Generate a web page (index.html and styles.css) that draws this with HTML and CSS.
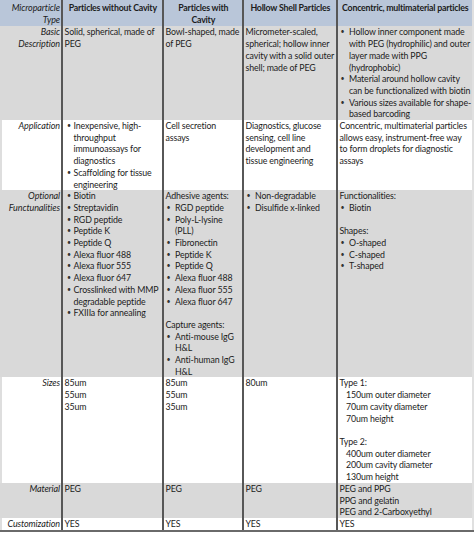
FILE: index.html
```html
<!DOCTYPE html>
<html lang="en">
<head>
<meta charset="utf-8">
<title>Microparticle comparison</title>
<link rel="stylesheet" href="styles.css">
</head>
<body>
<div class="tbl">
  <div class="row head">
    <div class="cell lab">Microparticle<br>Type</div>
    <div class="cell">Particles without Cavity</div>
    <div class="cell">Particles with<br>Cavity</div>
    <div class="cell">Hollow Shell Particles</div>
    <div class="cell last">Concentric, multimaterial particles</div>
  </div>
  <div class="row shade">
    <div class="cell lab">Basic<br>Description</div>
    <div class="cell">Solid, spherical, made of<br>PEG</div>
    <div class="cell">Bowl-shaped, made<br>of PEG</div>
    <div class="cell">Micrometer-scaled,<br>spherical; hollow inner<br>cavity with a solid outer<br>shell; made of PEG</div>
    <div class="cell last">
      <ul class="bl">
        <li>Hollow inner component made<br>with PEG (hydrophilic) and outer<br>layer made with PPG<br>(hydrophobic)</li>
        <li>Material around hollow cavity<br>can be functionalized with biotin</li>
        <li>Various sizes available for shape-<br>based barcoding</li>
      </ul>
    </div>
  </div>
  <div class="row">
    <div class="cell lab">Application</div>
    <div class="cell">
      <ul class="bl wide">
        <li>Inexpensive, high-<br>throughput<br>immunoassays for<br>diagnostics</li>
        <li>Scaffolding for tissue<br>engineering</li>
      </ul>
    </div>
    <div class="cell">Cell secretion<br>assays</div>
    <div class="cell">Diagnostics, glucose<br>sensing, cell line<br>development and<br>tissue engineering</div>
    <div class="cell last">Concentric, multimaterial particles<br>allows easy, instrument-free way<br>to form droplets for diagnostic<br>assays</div>
  </div>
  <div class="row shade">
    <div class="cell lab">Optional<br>Functunalities</div>
    <div class="cell">
      <ul class="bl wide">
        <li>Biotin</li>
        <li>Streptavidin</li>
        <li>RGD peptide</li>
        <li>Peptide K</li>
        <li>Peptide Q</li>
        <li>Alexa fluor 488</li>
        <li>Alexa fluor 555</li>
        <li>Alexa fluor 647</li>
        <li>Crosslinked with MMP<br>degradable peptide</li>
        <li>FXIIIa for annealing</li>
      </ul>
    </div>
    <div class="cell">
      <p class="line">Adhesive agents:</p>
      <ul class="bl">
        <li>RGD peptide</li>
        <li>Poly-L-lysine<br>(PLL)</li>
        <li>Fibronectin</li>
        <li>Peptide K</li>
        <li>Peptide Q</li>
        <li>Alexa fluor 488</li>
        <li>Alexa fluor 555</li>
        <li>Alexa fluor 647</li>
      </ul>
      <p class="line gap">Capture agents:</p>
      <ul class="bl">
        <li>Anti-mouse IgG<br>H&amp;L</li>
        <li>Anti-human IgG<br>H&amp;L</li>
      </ul>
    </div>
    <div class="cell">
      <ul class="bl">
        <li>Non-degradable</li>
        <li>Disulfide x-linked</li>
      </ul>
    </div>
    <div class="cell last">
      <p class="line">Functionalities:</p>
      <ul class="bl">
        <li>Biotin</li>
      </ul>
      <p class="line gap">Shapes:</p>
      <ul class="bl">
        <li>O-shaped</li>
        <li>C-shaped</li>
        <li>T-shaped</li>
      </ul>
    </div>
  </div>
  <div class="row">
    <div class="cell lab">Sizes</div>
    <div class="cell">85um<br>55um<br>35um</div>
    <div class="cell">85um<br>55um<br>35um</div>
    <div class="cell">80um</div>
    <div class="cell last">
      <p class="line">Type 1:</p>
      <p class="line ind">150um outer diameter<br>70um cavity diameter<br>70um height</p>
      <p class="line gap">Type 2:</p>
      <p class="line ind">400um outer diameter<br>200um cavity diameter<br>130um height</p>
    </div>
  </div>
  <div class="row shade">
    <div class="cell lab">Material</div>
    <div class="cell">PEG</div>
    <div class="cell">PEG</div>
    <div class="cell">PEG</div>
    <div class="cell last">PEG and PPG<br>PPG and gelatin<br>PEG and 2-Carboxyethyl</div>
  </div>
  <div class="row">
    <div class="cell lab">Customization</div>
    <div class="cell">YES</div>
    <div class="cell">YES</div>
    <div class="cell">YES</div>
    <div class="cell last">YES</div>
  </div>
</div>
</body>
</html>
```

FILE: styles.css
```css
html, body {
  margin: 0;
  padding: 0;
  background: #ffffff;
}

.tbl {
  display: grid;
  grid-template-columns: 61px 101px 80px 94px 138px;
  width: 474px;
  font-family: Lato, "Open Sans", sans-serif;
  font-size: 8.8px;
  line-height: 11.7px;
  letter-spacing: -0.12px;
  color: #1c1c1c;
  border-bottom: 2px solid #6a6a6a;
  box-sizing: border-box;
}

.row {
  display: contents;
}

.cell {
  padding: 0 1px 0 1.5px;
  white-space: nowrap;
  overflow: hidden;
  border-left: 2px solid #575757;
  background: #ffffff;
}

.row.shade .cell {
  background: #d9d9d9;
}

.row.head .cell {
  background: #b9c6d9;
  font-weight: 700;
  text-align: center;
  letter-spacing: -0.22px;
  padding-top: 2px;
  padding-bottom: 1px;
}

.cell.lab {
  border-left: 2px solid #dedede;
  font-style: italic;
  text-align: right;
  padding-right: 1px;
  padding-left: 0;
  font-size: 9px;
  letter-spacing: -0.1px;
}

.row.head .cell.lab {
  border-left-color: #b9c6d9;
  font-weight: 400;
  letter-spacing: -0.1px;
  text-align: right;
}

.row.shade .cell.lab {
  border-left-color: #d9d9d9;
}

.cell.last {
  border-right: 2px solid #e0e0e0;
}

.line {
  margin: 0;
}

.line.gap {
  margin-top: 11.7px;
}

.line.ind {
  padding-left: 6.5px;
}

.bl {
  list-style: none;
  margin: 0;
  padding: 0;
}

.bl li {
  display: grid;
  grid-template-columns: 8.5px auto;
  padding-left: 1px;
}

.bl.wide li {
  padding-left: 2.5px;
  grid-template-columns: 6.5px auto;
}

.bl li::before {
  content: "\2022";
  font-size: 7px;
  color: #333333;
}
```
